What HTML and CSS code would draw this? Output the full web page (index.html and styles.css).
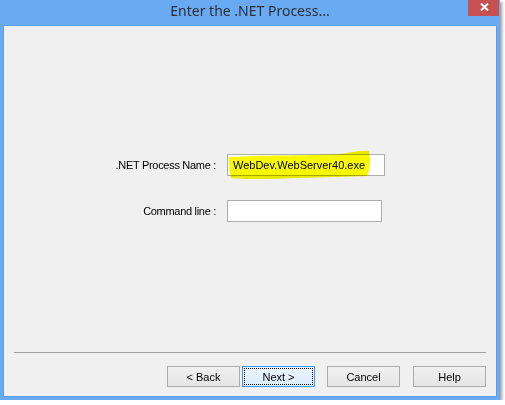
FILE: index.html
```html
<!DOCTYPE html>
<html>
<head>
<meta charset="utf-8">
<link rel="stylesheet" href="styles.css">
</head>
<body>
<div class="window">
  <div class="titlebar">
    <div class="spacer"></div>
    <div class="title">Enter the .NET Process...</div>
    <div class="controls">
      <div class="close">
        <svg width="9" height="8" viewBox="0 0 9 8"><path d="M1 0.5 L8 7.5 M8 0.5 L1 7.5" stroke="#fff" stroke-width="2"/></svg>
      </div>
    </div>
  </div>
  <div class="client">
    <div class="form">
      <label class="label">.NET Process Name :</label>
      <div class="field">
        <input class="input wide" type="text" value="WebDev.WebServer40.exe">
        <svg class="marker" width="150" height="34" viewBox="0 0 150 34"><path d="M2,8 C30,6 80,7 115,5 C125,3 135,1 142,2 L143,10 C143,18 142,24 140,27 C100,28 60,30 20,30 L4,29 C2,22 2,14 2,8 Z" fill="#f8f800"/></svg>
      </div>
      <label class="label">Command line :</label>
      <div class="field">
        <input class="input narrow" type="text" value="">
      </div>
    </div>
    <div class="footer">
      <div class="separator"></div>
      <div class="buttons">
        <button class="btn back">&lt; Back</button>
        <button class="btn next">Next &gt;</button>
        <button class="btn cancel">Cancel</button>
        <button class="btn help">Help</button>
      </div>
    </div>
  </div>
</div>
</body>
</html>
```
FILE: styles.css
```css
html, body {
  margin: 0;
  padding: 0;
  background: #ffffff;
}
.window {
  width: 500px;
  height: 400px;
  background: #6aaaf2;
  box-shadow: 2px 2px 3px rgba(0,0,0,0.4);
  display: flex;
  flex-direction: column;
  box-sizing: border-box;
}
.titlebar {
  height: 25px;
  display: grid;
  grid-template-columns: 1fr auto 1fr;
  align-items: start;
}
.title {
  font-family: "Noto Sans", "Open Sans", sans-serif;
  font-size: 14px;
  line-height: 22px;
  color: #2b2f36;
  white-space: nowrap;
}
.controls {
  display: flex;
  justify-content: flex-end;
  padding-right: 1px;
}
.close {
  width: 31px;
  height: 16px;
  background: #c75050;
  display: flex;
  align-items: center;
  justify-content: center;
}
.close svg {
  display: block;
  margin-left: 1px;
  margin-top: -2px;
}
.client {
  flex: 1;
  margin: 0 3px 3px 3px;
  background: #f0f0f0;
  border: 1px solid #5d9ce6;
  display: flex;
  flex-direction: column;
  padding: 128px 9px 9px 10px;
  font-family: "Liberation Sans", Arial, sans-serif;
  font-size: 11px;
  color: #000;
}
.form {
  display: grid;
  grid-template-columns: 202px auto;
  column-gap: 11px;
  row-gap: 24px;
  align-items: center;
}
.label {
  text-align: right;
  white-space: nowrap;
  letter-spacing: -0.3px;
}
.field {
  position: relative;
  justify-self: start;
}
.input {
  display: block;
  box-sizing: border-box;
  height: 22px;
  border: 1px solid #abadb3;
  background: #fff;
  padding: 0 0 0 5px;
  margin: 0;
  font-family: "Liberation Sans", Arial, sans-serif;
  font-size: 11px;
  color: #000;
  outline: none;
}
.wide { width: 158px; }
.narrow { width: 155px; }
.marker {
  position: absolute;
  left: 0;
  top: -5px;
  mix-blend-mode: multiply;
  pointer-events: none;
}
.footer {
  margin-top: auto;
}
.separator {
  height: 1px;
  background: #a0a0a0;
  margin-right: 1px;
}
.buttons {
  display: flex;
  justify-content: flex-end;
  margin-top: 13px;
}
.btn {
  width: 73px;
  height: 21px;
  box-sizing: border-box;
  border: 1px solid #acacac;
  background: linear-gradient(#f0f0f0, #e5e5e5);
  font-family: "Liberation Sans", Arial, sans-serif;
  font-size: 11px;
  color: #000;
  padding: 0;
  margin: 0;
}
.next {
  margin-left: 2px;
  border-color: #3399ff;
  background: linear-gradient(#ecf4fc, #dcecfc);
  outline: 1px dotted #000;
  outline-offset: -3px;
}
.cancel { margin-left: 12px; }
.help { margin-left: 13px; margin-right: 1px; }
```
